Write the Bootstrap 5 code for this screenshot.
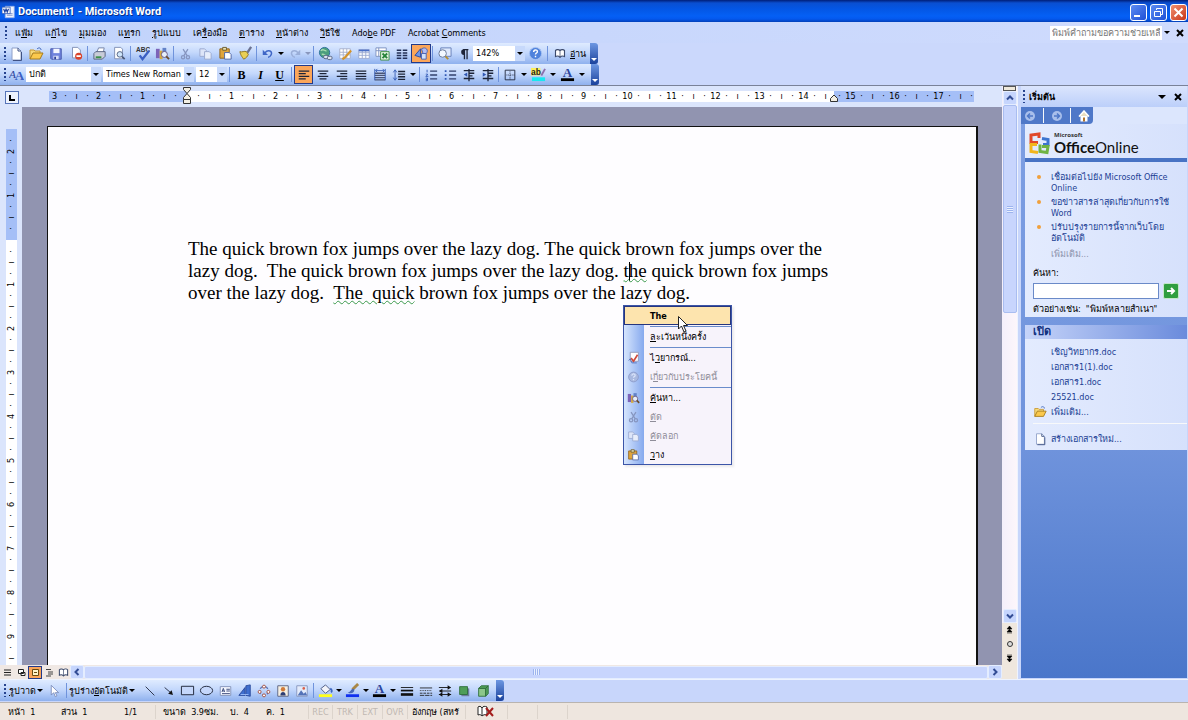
<!DOCTYPE html>
<html lang="th">
<head>
<meta charset="utf-8">
<meta name="viewport" content="width=device-width, initial-scale=1">
<title>Document1 - Microsoft Word</title>
<link href="https://cdn.jsdelivr.net/npm/bootstrap@5.3.0/dist/css/bootstrap.min.css" rel="stylesheet">
<style>
:root{--ui:"DejaVu Sans Condensed","Noto Sans",sans-serif;--navy:#1c3f94}
body{font-family:var(--ui);font-size:9px;line-height:12px;color:#000;background:#c8d6fb;height:100vh;overflow:hidden}
button{border:0;background:none;padding:0;color:inherit;font:inherit}
svg{display:block;flex:none}
u{text-underline-offset:1px}
a{text-decoration:none;color:var(--navy)}
.titlebar{height:22px;background:linear-gradient(#001e78 0,#0a4fd0 3px,#0455e2 8px,#0560f5 16px,#0458ee 19px,#0340b8 22px);color:#fff;padding:2px 1px 0 2px}
.titlebar h1{font:bold 11px/20px Roboto,"Noto Sans",sans-serif;margin:0;text-shadow:1px 1px 0 #0a2f8c}
.winbtn{width:17px;height:17px;border:1px solid #fff;border-radius:3px;background:linear-gradient(135deg,#5d8cf3,#1d4fd6)}
.winbtn.closer{background:linear-gradient(135deg,#f0906f,#c9361a)}
.menubar{height:21px;padding-left:5px;background:linear-gradient(90deg,#c1d3fb,#cfdbfd)}
.menubar .items{padding-left:8px;gap:12px}
.grip{width:2px;height:13px;flex:none;background:repeating-linear-gradient(#26438f 0 2px,transparent 2px 4px)}
.ask{width:112px;height:14px;border:0;background:#fff;font-size:9px;padding:0 2px;color:#777}
.ask::placeholder{color:#777}
.bars{background:#cbd8fc}
.tbar{height:21px;padding-left:4px;border-radius:0 2px 2px 0;background:linear-gradient(#dfebff,#c4d8fc 45%,#8fb1ee);flex:none}
.tb{width:20px;height:19px;display:flex;align-items:center;justify-content:center;flex:none}
.tb.n{width:19px}
.tb.on{border:1px solid #233a8a;background:#fba65a}
.dd{width:8px;height:18px;display:flex;align-items:center;justify-content:center;flex:none}
.b2 .dd,.menubar .dd,.pane .dd{width:10px}
.dd::after{content:"";border:3px solid transparent;border-top-color:#000;border-bottom:0}
.pane .dd::after{border-width:4px;border-bottom:0}
.dd.off::after{border-top-color:#8997bd}
.vsep{width:1px;height:15px;background:#6f93dc;margin:0 1px;flex:none}
.vsep.w{margin:0 2px}
.tail{width:8px;height:100%;margin-left:4px;background:linear-gradient(#6d97e2,#1b429c);border-radius:0 3px 3px 0;flex:none;display:flex;align-items:flex-end;justify-content:center;padding-bottom:3px}
.tail::after{content:"";border:3px solid transparent;border-top-color:#fff;border-bottom:0}
.combo{height:15px;border:0;border-radius:0;appearance:none;font-size:9px;line-height:13px;padding:0 12px 0 3px;background:#fff url("data:image/svg+xml,%3Csvg xmlns='http://www.w3.org/2000/svg' width='10' height='15'%3E%3Cpath fill='%23c7d9fb' d='M0 0h10v15H0z'/%3E%3Cpath d='M2 6h6l-3 3z'/%3E%3C/svg%3E") right/10px 15px no-repeat;color:#000;flex:none}
.combos{gap:2px}
.lbl{font:bold 12px/14px "Liberation Serif",serif}
.workspace{min-height:0;border-top:1px solid #7a8298}
.hruler{height:21px;background:#dbe5fc;padding:5px 28px 0 5px}
.tabsel{width:14px;height:13px;border:1px solid #5674b8;background:#eef3fe;flex:none}
.rule{font-size:9px;line-height:11px;height:11px}
.rule span{width:11px;text-align:center;flex:none}
.z-blue{background:#a5bff7}
.z-white{background:#fff}
.vrulerbox{width:22px;background:#dbe5fc;padding:22px 5px 0 6px;flex:none;overflow:hidden}
.vrule{width:11px;font-size:9px;line-height:11px}
.vrule span{height:11px;width:11px;display:flex;align-items:center;justify-content:center;transform:rotate(-90deg);flex:none}
.canvas{background:#9194b0;padding:19px 24px 0 25px;overflow:hidden}
.sheet{background:#fefdff;border:1px solid #111;border-right-width:2px;border-bottom:0;padding:111px 0 0 140px;height:100%;font:19px/22px "Liberation Serif",serif;position:relative;white-space:pre}
.sheet p{margin:0;line-height:22px}
.gram{text-decoration:underline wavy #3b9a4c 1px;text-underline-offset:1px}
.caret{display:inline-block;width:1px;height:19px;background:#000;vertical-align:-4px;margin-right:-1px}
.ctx{position:absolute;left:575px;top:178px;width:109px;font:9px/12px var(--ui);background:linear-gradient(90deg,#d6e5fd,#86a9ee 20px,#f7f3fb 20px);border:1px solid #3c55a8;box-shadow:2px 2px 2px #9993;white-space:nowrap}
.ctx button{display:flex;align-items:center;height:19px;width:100%;padding-left:3px}
.ctx button svg{margin-right:10px}
.ctx .pad{padding-left:26px}
.ctx .off{color:#8f8d99}
.ctx .pick{border:1px solid #26367e;background:#fde4ae;font-weight:bold;padding-left:25px}
.ctx hr{margin:1px 0 0 26px;border-top:1px solid #6a8ccb;opacity:1}
.pointer{position:absolute;left:630px;top:189px}
.vscroll{width:16px;background:linear-gradient(90deg,#f4effb,#fdf6fb);flex:none;border-right:1px solid #eef3fe}
.split{height:5px;width:13px;border:1px solid #555;background:#efe9dc}
.sbtn{width:14px;height:14px;background:#c6d5fd;border:1px solid #e4edff;border-radius:2px;display:flex;align-items:center;justify-content:center;flex:none}
.thumbv{width:14px;height:208px;background:#c8d5fd;border:1px solid #a9bdf0;border-radius:2px;display:flex;align-items:center;justify-content:center}
.thumbv::after{content:"";width:6px;height:7px;background:repeating-linear-gradient(#9db4ee 0 1px,#e9f0ff 1px 2px)}
.vscroll .foot{background:#efe7de;width:100%}
.hscroll{height:14px;background:#f0e8e4;flex:none}
.hscroll .tb{width:14px;height:13px}
.thumbh{background:#c8d5fd;border:1px solid #e4edff;height:13px;border-radius:2px;display:flex;align-items:center;justify-content:center}
.thumbh::after{content:"";width:7px;height:6px;background:repeating-linear-gradient(90deg,#9db4ee 0 1px,#e9f0ff 1px 2px)}
.pane{width:170px;background:#c8d6fb;padding:0 1px 1px 3px;flex:none}
.pane header{height:21px;padding:0 2px 0 2px;background:linear-gradient(#dbe5fd,#bccffa);font-weight:bold}
.pane .inner{background:linear-gradient(#7e9fe3,#6f93dc 60%,#4a76ca);padding-left:4px;min-height:0}
.pane .navtab{width:72px;height:17px;margin-left:-4px;background:#4f78c8;border-radius:0 0 4px 0;flex:none}
.pane .sect{background:linear-gradient(90deg,#e3ebfe,#d6e1fc)}
.pane .navrow{background:#dce6fd}
.pane .brand{height:38px;padding:8px 0 0 4px;border-bottom:4px solid #4873c4}
.brandname{font:15px/17px Lato,sans-serif;color:#111}
.brandname b{font-weight:700}
.brand small{font:bold 6px/7px "Open Sans",sans-serif;color:#333}
.bul{list-style:none;margin:0;padding:10px 8px 0 26px}
.bul li{line-height:11px;margin-bottom:3px;position:relative}
.bul li:last-child{padding-top:2px}
.bul li.dotted::before{content:"";position:absolute;left:-14px;top:3px;width:4px;height:4px;border-radius:2px;background:#f0a03c}
.find{width:127px;height:16px;border:1px solid #6a8ac8;background:#fff;padding:0 2px;font-size:9px}
.go{width:16px;height:16px;background:#2f9e3f;border:1px solid #c4e6c8;border-radius:2px;display:flex;align-items:center;justify-content:center}
.opener{height:14px;background:linear-gradient(90deg,#c6d4f9,#6a8bdc);color:#10307e;font-size:11px;line-height:14px;font-weight:bold;padding-left:8px;margin:0}
.files{padding:6px 0 0 26px}
.files a{display:block;height:15px;line-height:15px}
.withicon{padding-left:8px;height:14px;gap:4px}
.drawbar{height:23px;background:#c8d6fb;flex:none;border-top:1px solid #eef3fe}
.status{height:18px;background:#eee6df;border-top:1px solid #b9b4b0;flex:none;padding:2px 0 0}
.status span{border-right:1px solid #dcd4cc;height:14px;line-height:14px;flex:none;white-space:pre;overflow:hidden}
.status .dim{color:#c0b8b2}
</style>
</head>
<body class="d-flex flex-column">

<svg width="0" height="0" class="position-absolute" aria-hidden="true">
<defs>
<symbol id="i-new" viewBox="0 0 16 16"><path d="M4 2h6l3 3v9H4z" fill="#fff" stroke="#8fa0c8"/><path d="M10 2v3h3M5 14.500h8.500V6" fill="none" stroke="#3f5284"/></symbol>
<symbol id="i-open" viewBox="0 0 16 16"><path d="M2 13V4h4l1 1h5v3" fill="#f7d978" stroke="#c99a35"/><path d="M2 13l3-6h10l-3 6z" fill="#fbc94c" stroke="#a57a1c"/><path d="M9 3c2-2 4-1 4 1" fill="none" stroke="#3a62b8"/></symbol>
<symbol id="i-save" viewBox="0 0 16 16"><path d="M2 2h12v12H3l-1-1z" fill="#6f82dc" stroke="#4152a8"/><path d="M5 2h7v5H5z" fill="#f4f6ff"/><path d="M5 10h6v4H5z" fill="#d5dcf6"/><path d="M6 11h2v3H6z" fill="#2f3f94"/></symbol>
<symbol id="i-perm" viewBox="0 0 16 16"><path d="M4 1h6l3 3v9H4z" fill="#fff" stroke="#7a8ab0"/><circle cx="11" cy="11" r="4" fill="#d8432b"/><path d="M8.500 10h5v2h-5z" fill="#fff"/></symbol>
<symbol id="i-print" viewBox="0 0 16 16"><path d="M5 7l2-5h6l-1 5z" fill="#fff" stroke="#7482a5"/><path d="M2 8l2-2h10v5l-3 3H2z" fill="#c8ccd8" stroke="#56617f"/><path d="M4 12h6" stroke="#3b8f48" stroke-width="2"/></symbol>
<symbol id="i-preview" viewBox="0 0 16 16"><path d="M3 1h7l2 2v11H3z" fill="#fff" stroke="#7a8ab0"/><circle cx="9" cy="9" r="3.200" fill="#cfe6fb" stroke="#4a5878"/><path d="M11.500 11.500l3 3" stroke="#4a5878" stroke-width="2"/></symbol>
<symbol id="i-spell" viewBox="0 0 16 16"><text x="1" y="6" font-size="7" font-weight="bold" font-family="Liberation Sans" fill="#333">ABC</text><path d="M5 10l3 4 7-9" fill="none" stroke="#3b5fc4" stroke-width="2.500"/></symbol>
<symbol id="i-research" viewBox="0 0 16 16"><path d="M1 3h4v10H1z" fill="#7c63b8"/><path d="M5 5h3v9H5z" fill="#d6a93f"/><path d="M8 2h4v10H8z" fill="#6383c8"/><circle cx="10" cy="9" r="3.200" fill="#e6effc" stroke="#6a587e"/><path d="M12 11l3 3" stroke="#6b4b2c" stroke-width="2"/></symbol>
<symbol id="i-cut" viewBox="0 0 16 16"><path d="M5 2l5 8M11 2L6 10" stroke="#8695bf" stroke-width="1.500"/><circle cx="5" cy="12" r="2" fill="none" stroke="#8695bf" stroke-width="1.500"/><circle cx="11" cy="12" r="2" fill="none" stroke="#8695bf" stroke-width="1.500"/></symbol>
<symbol id="i-copy" viewBox="0 0 16 16"><path d="M2 3h5l2 2v6H2z" fill="#dde5f8" stroke="#9aa9cf"/><path d="M7 6h5l2 2v6H7z" fill="#e8eefb" stroke="#9aa9cf"/></symbol>
<symbol id="i-paste" viewBox="0 0 16 16"><path d="M2 3h10v10H2z" fill="#e0a53c" stroke="#8f6420"/><path d="M5 1.500h4v3H5z" fill="#e8e2b8" stroke="#6b5b2c"/><path d="M7 7h5l2 2v5H7z" fill="#fff" stroke="#4f65a5"/></symbol>
<symbol id="i-brush" viewBox="0 0 16 16"><path d="M14 1l-4 6" stroke="#6b7290" stroke-width="2.500"/><path d="M2 6c2 1 5-1 7 0l2 3c-1 2-2 4-5 5-1-2-3-3-4-8z" fill="#e9cf55" stroke="#8d7420"/></symbol>
<symbol id="i-undo" viewBox="0 0 16 16"><path d="M4 7c4-5 11-2 8 3-1 2-2 3-4 3" fill="none" stroke="#3f66c6" stroke-width="2"/><path d="M1 3v7h7z" fill="#3f66c6"/></symbol>
<symbol id="i-redo" viewBox="0 0 16 16"><path d="M12 7C8 2 1 5 4 10c1 2 2 3 4 3" fill="none" stroke="#9aaed8" stroke-width="2"/><path d="M15 3v7H8z" fill="#9aaed8"/></symbol>
<symbol id="i-link" viewBox="0 0 16 16"><circle cx="7" cy="7" r="5.500" fill="#4c9e7e" stroke="#2b6f9b"/><path d="M3 5c3-3 4 1 6 0M4 9c3-1 3 2 5 1" stroke="#a8dcb0" stroke-width="1.500" fill="none"/><rect x="6" y="10" width="5" height="3.500" rx="1.500" fill="#dde3f0" stroke="#576483"/><rect x="10" y="11" width="5" height="3.500" rx="1.500" fill="#dde3f0" stroke="#576483"/></symbol>
<symbol id="i-drawtbl" viewBox="0 0 16 16"><path d="M2 2h12v11H2zM2 6h12M2 9h12M6 2v11M10 2v11" fill="#fff" stroke="#a3adc9"/><path d="M15 4L8 12l-3 2" stroke="#d3942c" stroke-width="2.500" fill="none"/></symbol>
<symbol id="i-tbl" viewBox="0 0 16 16"><path d="M2 3h12v10H2zM2 6.500h12M2 9.500h12M6 3v10M10 3v10" fill="#fff" stroke="#98a7d0"/><path d="M2 3h12v2H2z" fill="#4a6fc6"/></symbol>
<symbol id="i-excel" viewBox="0 0 16 16"><path d="M1 2h11v9H1zM1 5h11M4 2v9" fill="#fff" stroke="#7e92c0"/><path d="M6 6h9v9H6z" fill="#e7f4e4" stroke="#3f8f46"/><path d="M8 8l5 5M13 8l-5 5" stroke="#26843a" stroke-width="2"/></symbol>
<symbol id="i-cols" viewBox="0 0 16 16"><path d="M1 3h6M1 6.500h6M1 10h6M1 13.500h6M9 3h6M9 6.500h6M9 10h6M9 13.500h6" stroke="#243056" stroke-width="2"/></symbol>
<symbol id="i-draw" viewBox="0 0 16 16"><path d="M1 10L7 3v9z" fill="#6f95e6" stroke="#2a4aa0"/><path d="M8 3c5-3 8 2 5 5l-3 1z" fill="#b3bcf2" stroke="#4a62b4"/><path d="M8 8h5v6H8z" fill="#d2e0fb" stroke="#4a62b4"/></symbol>
<symbol id="i-map" viewBox="0 0 16 16"><path d="M4 2h11v9H4z" fill="#dfe9fd" stroke="#6880b8"/><circle cx="6" cy="8" r="4" fill="#f3f8ff" stroke="#667799"/><path d="M9 11l3 3" stroke="#b78e2d" stroke-width="2"/></symbol>
<symbol id="i-pilcrow" viewBox="0 0 16 16"><path d="M7 3h6M8.500 3v11M11.500 3v11" stroke="#1d2438" stroke-width="1.500"/><path d="M8 2.500a3.200 3.200 0 0 0 0 6.500z" fill="#1d2438"/></symbol>
<symbol id="i-help" viewBox="0 0 16 16"><circle cx="8" cy="8" r="6.500" fill="#4f82dc" stroke="#a9c3f2"/><path d="M6 6.500c0-3 4-3 4-.5 0 1.500-2 1.500-2 3M8 10.500v1.500" stroke="#fff" stroke-width="1.500" fill="none"/></symbol>
<symbol id="i-helpoff" viewBox="0 0 16 16"><circle cx="8" cy="8" r="6" fill="#a9b9e0" stroke="#8998c8"/><path d="M6 6.500c0-3 4-3 4-.5 0 1.500-2 1.500-2 3M8 10.500v1.500" stroke="#dbe4fa" stroke-width="1.500" fill="none"/></symbol>
<symbol id="i-book" viewBox="0 0 16 16"><path d="M8 4C6 2 3 3 2 4v8c2-1 4-1 6 1 2-2 4-2 6-1V4c-1-1-4-2-6 0z" fill="#fff" stroke="#3c4a6c" stroke-width="1.500"/><path d="M8 4v9" stroke="#3c4a6c"/></symbol>
<symbol id="i-left" viewBox="0 0 16 16"><path d="M2 3.500h12M2 6.500h8M2 9.500h12M2 12.500h8" stroke="#1d2438" stroke-width="1.500"/></symbol>
<symbol id="i-center" viewBox="0 0 16 16"><path d="M2 3.500h12M4 6.500h8M2 9.500h12M4 12.500h8" stroke="#1d2438" stroke-width="1.500"/></symbol>
<symbol id="i-right" viewBox="0 0 16 16"><path d="M2 3.500h12M6 6.500h8M2 9.500h12M6 12.500h8" stroke="#1d2438" stroke-width="1.500"/></symbol>
<symbol id="i-just" viewBox="0 0 16 16"><path d="M2 3.500h12M2 6.500h12M2 9.500h12M2 12.500h12" stroke="#1d2438" stroke-width="1.500"/></symbol>
<symbol id="i-dist" viewBox="0 0 16 16"><path d="M2 6h12M2 8.500h12M2 11h12M2 13.500h12" stroke="#4a5474" stroke-width="1.500"/><path d="M2 1v13M14 1v13M3 3h10M5 1L3 3l2 2M11 1l2 2-2 2" stroke="#3058b4" fill="none"/></symbol>
<symbol id="i-space" viewBox="0 0 16 16"><path d="M7 4h8M7 7h8M7 10h8M7 13h8" stroke="#1d2438" stroke-width="1.500"/><path d="M3.500 3v10M1.500 5l2-3 2 3M1.500 11l2 3 2-3" stroke="#3058b4" fill="none"/></symbol>
<symbol id="i-num" viewBox="0 0 16 16"><path d="M7 3.500h8M7 8h8M7 12.500h8" stroke="#33416d" stroke-width="1.500"/><path d="M3.500 2v3M2 7h2v1L2 9.500h3M2 11.500h2v3H2M2 13h2" stroke="#3058b4" fill="none"/></symbol>
<symbol id="i-bul" viewBox="0 0 16 16"><path d="M7 3.500h8M7 8h8M7 12.500h8" stroke="#33416d" stroke-width="1.500"/><path d="M2 2.500h2v2H2zM2 7h2v2H2zM2 11.500h2v2H2z" fill="#3058b4"/></symbol>
<symbol id="i-outd" viewBox="0 0 16 16"><path d="M2 3h12M8 6h6M8 9h4M2 12h12M8 1v14" stroke="#1d2438" stroke-width="1.500"/><path d="M6 5v5L2 7.500z" fill="#3058b4"/></symbol>
<symbol id="i-ind" viewBox="0 0 16 16"><path d="M2 3h12M8 6h6M8 9h4M2 12h12M8 1v14" stroke="#1d2438" stroke-width="1.500"/><path d="M2 5v5l4-2.500z" fill="#3058b4"/></symbol>
<symbol id="i-border" viewBox="0 0 16 16"><path d="M2.500 2.500h11v11h-11z" fill="none" stroke="#1d2438"/><path d="M8 4v9M4 8h9" stroke="#1d2438" stroke-dasharray="1 1"/></symbol>
<symbol id="i-hl" viewBox="0 0 16 16"><path d="M0 1h10v8H0z" fill="#fdf05a"/><text x="0" y="8" font-size="9" font-weight="bold" font-family="Liberation Sans" fill="#222">ab</text><path d="M15 2l-4 7" stroke="#8c6fae" stroke-width="2"/><path d="M1 11h14v4H1z" fill="#18e8f0"/></symbol>
<symbol id="i-color" viewBox="0 0 16 16"><text x="3" y="11" font-size="14" font-weight="bold" font-family="Liberation Serif" fill="#2c459c">A</text><path d="M1 12h14v3H1z" fill="#000"/></symbol>
<symbol id="i-style" viewBox="0 0 16 16"><text x="0" y="12" font-size="12" font-style="italic" font-family="Liberation Serif" fill="#2c459c">A</text><text x="6" y="14" font-size="14" font-weight="bold" font-family="Liberation Serif" fill="#3b5fc4">A</text></symbol>
<symbol id="i-arrow" viewBox="0 0 16 16"><path d="M4 1v12l3-3 2 5 2-1-2-4h4z" fill="#fff" stroke="#7184b5"/></symbol>
<symbol id="i-line" viewBox="0 0 16 16"><path d="M3 3l10 10" stroke="#1d2438"/></symbol>
<symbol id="i-larrow" viewBox="0 0 16 16"><path d="M3 4l7 6" stroke="#1d2438"/><path d="M12.500 12.500L7 11l4-4z" fill="#111"/></symbol>
<symbol id="i-rect" viewBox="0 0 16 16"><path d="M1.500 3.500h13v9h-13z" fill="#c5d7fb" stroke="#1d2438"/></symbol>
<symbol id="i-oval" viewBox="0 0 16 16"><ellipse cx="8" cy="8" rx="6.500" ry="4.500" fill="#c5d7fb" stroke="#1d2438"/></symbol>
<symbol id="i-tbox" viewBox="0 0 16 16"><path d="M2 3h12v10H2z" fill="#f4f7ff" stroke="#7d8db5"/><path d="M4 9l1.500-4L7 9M4.500 8h2M9 6h4M9 8h4M4 11h9" stroke="#2b3d70" fill="none"/></symbol>
<symbol id="i-wordart" viewBox="0 0 16 16"><path d="M1 13L8 4v9zM9 2l5-1v13l-5-1z" fill="#3f6fd0" stroke="#28489a"/><path d="M3 12h9" stroke="#9fc0fa"/></symbol>
<symbol id="i-diag" viewBox="0 0 16 16"><circle cx="8" cy="8" r="5" fill="none" stroke="#5873b5" stroke-width="1.500" stroke-dasharray="4 2"/><g fill="#fff" stroke="#a44b3c"><circle cx="8" cy="3" r="1.700"/><circle cx="13" cy="9" r="1.700"/><circle cx="8" cy="13" r="1.700"/><circle cx="3" cy="9" r="1.700"/></g></symbol>
<symbol id="i-clip" viewBox="0 0 16 16"><path d="M2 2h12v12H2z" fill="#f5efe2" stroke="#555e7d"/><circle cx="8" cy="6" r="2.500" fill="#d07b3a"/><path d="M5 13c0-5 6-5 6 0z" fill="#2d3e74"/></symbol>
<symbol id="i-pic" viewBox="0 0 16 16"><path d="M2 2h12v12H2z" fill="#e3ebfb" stroke="#8393bb"/><circle cx="10" cy="5" r="1.500" fill="#d8604a"/><path d="M3 13l4-6 3 4 2-2 2 4z" fill="#5473b8"/></symbol>
<symbol id="i-fill" viewBox="0 0 16 16"><path d="M3 6l5-4 5 5-5 4z" fill="#f2f4fa" stroke="#4f5d85"/><path d="M13 6c2 1 2 3 1 4" stroke="#3c66c0" stroke-width="2" fill="none"/><path d="M1 12h14v3H1z" fill="#ffff20"/></symbol>
<symbol id="i-pen" viewBox="0 0 16 16"><path d="M14 1L8 7" stroke="#a98746" stroke-width="3"/><path d="M9 6c-3 0-3 4-6 4 3 2 7 1 7-3z" fill="#4868b8"/><path d="M1 12h14v3H1z" fill="#1030f0"/></symbol>
<symbol id="i-lw" viewBox="0 0 16 16"><path d="M1 4h14" stroke="#111"/><path d="M1 7.500h14" stroke="#111" stroke-width="2"/><path d="M1 12h14" stroke="#111" stroke-width="3"/></symbol>
<symbol id="i-dash" viewBox="0 0 16 16"><path d="M1 4.500h14" stroke="#222"/><path d="M1 7.500h14" stroke="#222" stroke-dasharray="1 1"/><path d="M1 10.500h14" stroke="#222" stroke-dasharray="3 1"/><path d="M1 13h14" stroke="#222" stroke-dasharray="5 1"/></symbol>
<symbol id="i-arrs" viewBox="0 0 16 16"><path d="M1 4h13M2 8h13M1 12h14" stroke="#111"/><path d="M11 1.500L15 4l-4 2.500zM5 5.500L1 8l4 2.500zM11 9.500l4 2.500-4 2.500zM5 9.500L1 12l4 2.500z" fill="#111"/></symbol>
<symbol id="i-shadow" viewBox="0 0 16 16"><path d="M5 5h9v9H5z" fill="#6d7c9e"/><path d="M3 3h9v9H3z" fill="#4f9e58" stroke="#2f6e3c"/></symbol>
<symbol id="i-3d" viewBox="0 0 16 16"><path d="M3 5h8v9H3z" fill="#8cc78a" stroke="#2f6e3c"/><path d="M3 5l3-3h8l-3 3zM11 5l3-3v9l-3 3z" fill="#4f9e58" stroke="#2f6e3c"/></symbol>
<symbol id="i-gram" viewBox="0 0 16 16"><path d="M4 1h10v11H4z" fill="#fff" stroke="#8c94b4"/><path d="M5 8l3 4 5-8" stroke="#d04a3a" stroke-width="2" fill="none"/><path d="M2 11l2-2 2 5h6" stroke="#4868b8" fill="none"/></symbol>
</defs>
</svg>

<div class="titlebar d-flex align-items-center">
  <svg width="13" height="14" viewBox="0 0 16 16"><path d="M4 1h11v14H4z" fill="#eef3ff" stroke="#9cb4e8"/><path d="M6 10h7M6 12h7" stroke="#6c86c6"/><path d="M0 2h10v8H0z" fill="#fff" stroke="#2f56b4"/><path d="M2 4l1.500 4L5 4.500 6.500 8 8 4" stroke="#2246a4" stroke-width="1.500" fill="none"/></svg>
  <h1 class="flex-grow-1" style="padding-left:3px">Document1 - Microsoft Word</h1>
  <div class="d-flex" style="gap:3px">
    <button class="winbtn" aria-label="ย่อ"><svg width="15" height="15"><path d="M3 10h6v2H3z" fill="#fff"/></svg></button>
    <button class="winbtn" aria-label="คืนขนาด"><svg width="15" height="15"><path d="M5.500 5V3.500h6v6H10M3.500 6.500h6v5h-6z" fill="none" stroke="#fff"/></svg></button>
    <button class="winbtn closer" aria-label="ปิด"><svg width="15" height="15"><path d="M3.500 3.500l8 8M11.500 3.500l-8 8" stroke="#fff" stroke-width="2"/></svg></button>
  </div>
</div>

<nav class="menubar d-flex align-items-center">
  <i class="grip"></i>
  <div class="items d-flex flex-grow-1">
    <button>แ<u>ฟ้</u>ม</button><button>แ<u>ก้</u>ไข</button><button><u>มุ</u>มมอง</button><button>แ<u>ท</u>รก</button><button><u>รู</u>ปแบบ</button><button>เค<u>รื่</u>องมือ</button><button><u>ต</u>าราง</button><button><u>ห</u>น้าต่าง</button><button><u>วิ</u>ธีใช้</button><button>Ado<u>b</u>e PDF</button><button>Acrobat <u>C</u>omments</button>
  </div>
  <input class="ask" placeholder="พิมพ์คำถามขอความช่วยเหลือ" aria-label="คำถาม">
  <button class="dd" aria-label="รายการคำถาม"></button>
  <button class="tb" style="width:16px" aria-label="ปิดเอกสาร"><svg width="8" height="8"><path d="M1 1l6 6M7 1L1 7" stroke="#000" stroke-width="2"/></svg></button>
</nav>

<div class="bars d-flex flex-column align-items-start">
  <div class="tbar d-flex align-items-center" role="toolbar">
    <i class="grip"></i>
    <button class="tb" aria-label="สร้าง"><svg width="16" height="16"><use href="#i-new"/></svg></button>
    <button class="tb" aria-label="เปิด"><svg width="16" height="16"><use href="#i-open"/></svg></button>
    <button class="tb" aria-label="บันทึก"><svg width="14" height="14"><use href="#i-save"/></svg></button>
    <button class="tb" aria-label="สิทธิ์"><svg width="14" height="15"><use href="#i-perm"/></svg></button>
    <i class="vsep"></i>
    <button class="tb" aria-label="พิมพ์"><svg width="15" height="15"><use href="#i-print"/></svg></button>
    <button class="tb" aria-label="ตัวอย่าง"><svg width="14" height="15"><use href="#i-preview"/></svg></button>
    <i class="vsep"></i>
    <button class="tb" aria-label="สะกด"><svg width="15" height="15"><use href="#i-spell"/></svg></button>
    <button class="tb" aria-label="ค้นคว้า"><svg width="15" height="15"><use href="#i-research"/></svg></button>
    <i class="vsep"></i>
    <button class="tb" aria-label="ตัด"><svg width="13" height="14"><use href="#i-cut"/></svg></button>
    <button class="tb" aria-label="คัดลอก"><svg width="15" height="15"><use href="#i-copy"/></svg></button>
    <button class="tb" aria-label="วาง"><svg width="15" height="15"><use href="#i-paste"/></svg></button>
    <button class="tb" aria-label="ตัวคัดวางรูปแบบ"><svg width="15" height="15"><use href="#i-brush"/></svg></button>
    <i class="vsep"></i>
    <button class="tb n" aria-label="เลิกทำ"><svg width="12" height="13"><use href="#i-undo"/></svg></button><button class="dd" aria-label="รายการเลิกทำ"></button>
    <button class="tb n" aria-label="ทำซ้ำ"><svg width="12" height="13"><use href="#i-redo"/></svg></button><button class="dd off" aria-label="รายการทำซ้ำ"></button>
    <i class="vsep"></i>
    <button class="tb" aria-label="ลิงก์"><svg width="15" height="15"><use href="#i-link"/></svg></button>
    <button class="tb n" aria-label="วาดตาราง"><svg width="14" height="14"><use href="#i-drawtbl"/></svg></button>
    <button class="tb n" aria-label="แทรกตาราง"><svg width="14" height="14"><use href="#i-tbl"/></svg></button>
    <button class="tb n" aria-label="Excel"><svg width="15" height="15"><use href="#i-excel"/></svg></button>
    <button class="tb n" aria-label="คอลัมน์"><svg width="12" height="12"><use href="#i-cols"/></svg></button>
    <button class="tb on" aria-label="รูปวาด"><svg width="15" height="15"><use href="#i-draw"/></svg></button>
    <i class="vsep"></i>
    <button class="tb" aria-label="แผนผัง"><svg width="15" height="15"><use href="#i-map"/></svg></button>
    <button class="tb n" aria-label="แสดงย่อหน้า"><svg width="14" height="14"><use href="#i-pilcrow"/></svg></button>
    <select class="combo" style="width:52px" aria-label="ย่อขยาย"><option>142%</option></select>
    <button class="tb" aria-label="วิธีใช้"><svg width="15" height="15"><use href="#i-help"/></svg></button>
    <i class="vsep w"></i>
    <button class="d-flex align-items-center gap-1 ms-1"><svg width="12" height="13"><use href="#i-book"/></svg><span><u>อ่</u>าน</span></button>
    <i class="tail"></i>
  </div>
  <div class="tbar b2 d-flex align-items-center" role="toolbar">
    <i class="grip"></i>
    <button class="tb" aria-label="ลักษณะ"><svg width="15" height="15"><use href="#i-style"/></svg></button>
    <div class="combos d-flex"><select class="combo" style="width:75px" aria-label="ลักษณะ"><option>ปกติ</option></select><select class="combo" style="width:91px" aria-label="แบบอักษร"><option>Times New Roman</option></select><select class="combo" style="width:31px" aria-label="ขนาด"><option>12</option></select></div>
    <i class="vsep w"></i>
    <button class="tb n lbl">B</button><button class="tb n lbl fst-italic">I</button><button class="tb n lbl text-decoration-underline">U</button>
    <i class="vsep w"></i>
    <button class="tb n on" aria-label="ชิดซ้าย"><svg width="14" height="14"><use href="#i-left"/></svg></button>
    <button class="tb n" aria-label="กึ่งกลาง"><svg width="14" height="14"><use href="#i-center"/></svg></button>
    <button class="tb n" aria-label="ชิดขวา"><svg width="14" height="14"><use href="#i-right"/></svg></button>
    <button class="tb n" aria-label="เต็มแนว"><svg width="14" height="14"><use href="#i-just"/></svg></button>
    <button class="tb n" aria-label="กระจาย"><svg width="14" height="14"><use href="#i-dist"/></svg></button>
    <button class="tb n" aria-label="ระยะบรรทัด"><svg width="14" height="14"><use href="#i-space"/></svg></button><button class="dd" aria-label="ระยะ"></button>
    <i class="vsep"></i>
    <button class="tb n" aria-label="ลำดับเลข"><svg width="14" height="14"><use href="#i-num"/></svg></button>
    <button class="tb n" aria-label="สัญลักษณ์"><svg width="14" height="14"><use href="#i-bul"/></svg></button>
    <button class="tb n" aria-label="ลดเยื้อง"><svg width="14" height="14"><use href="#i-outd"/></svg></button>
    <button class="tb n" aria-label="เพิ่มเยื้อง"><svg width="14" height="14"><use href="#i-ind"/></svg></button>
    <i class="vsep"></i>
    <button class="tb n" aria-label="เส้นขอบ"><svg width="14" height="14"><use href="#i-border"/></svg></button><button class="dd" aria-label="เส้นขอบอื่น"></button>
    <button class="tb n" aria-label="เน้น"><svg width="15" height="15"><use href="#i-hl"/></svg></button><button class="dd" aria-label="สีเน้น"></button>
    <button class="tb n" aria-label="สีอักษร"><svg width="15" height="15"><use href="#i-color"/></svg></button><button class="dd" aria-label="สีอื่น"></button>
    <i class="tail"></i>
  </div>
</div>

<main class="workspace d-flex flex-grow-1">
  <div class="d-flex flex-column flex-grow-1 overflow-hidden">
    <div class="hruler d-flex">
      <button class="tabsel" aria-label="แท็บ"><svg width="12" height="11"><path d="M4 3v5h5" stroke="#000" stroke-width="2" fill="none"/></svg></button>
      <div class="rule d-flex z-blue justify-content-end" id="r-left" style="width:138px;margin-left:30px"></div>
      <div class="rule d-flex z-white position-relative flex-grow-1" id="r-mid" style="padding-left:6px">
        <svg class="position-absolute" style="left:-5px;top:-5px" width="10" height="20"><path d="M1.500 1.500h7v2L5 7.500l3.500 4v2h-7v-2L5 7.500 1.500 3.500zM1.500 13.500h7v4h-7z" fill="#f3efe4" stroke="#333"/></svg>
        <svg class="position-absolute" style="right:-5px;top:3px" width="10" height="8"><path d="M5 1l3.500 3.500v3h-7v-3z" fill="#f3efe4" stroke="#333"/></svg>
      </div>
      <div class="rule d-flex z-blue overflow-hidden" id="r-right" style="width:140px"></div>
    </div>
    <div class="d-flex flex-grow-1 overflow-hidden">
      <div class="vrulerbox d-flex flex-column">
        <div class="vrule z-blue d-flex flex-column justify-content-end" id="v-top" style="height:111px;padding-bottom:6px"></div>
        <div class="vrule z-white d-flex flex-column flex-grow-1" id="v-mid" style="padding-top:6px"></div>
      </div>
      <div class="canvas flex-grow-1">
        <article class="sheet"><p>The quick brown fox jumps over the lazy dog. The quick brown fox jumps over the</p><p>lazy dog.  The quick brown fox jumps over the lazy dog. <span class="gram">t<i class="caret"></i>he</span> quick brown fox jumps</p><p>over the lazy dog.  <span class="gram">The  quick</span> brown fox jumps over the lazy dog.</p><div class="ctx" role="menu"><button class="pick">The</button><hr><button class="pad"><span><u>ล</u>ะเว้นหนึ่งครั้ง</span></button><hr><button><svg width="13" height="14"><use href="#i-gram"/></svg>ไ<u>ว</u>ยากรณ์...</button><button class="off"><svg width="13" height="14"><use href="#i-helpoff"/></svg>เ<u>กี่</u>ยวกับประโยคนี้</button><hr><button><svg width="13" height="14"><use href="#i-research"/></svg><u>ค้</u>นหา...</button><button class="off"><svg width="13" height="14"><use href="#i-cut"/></svg><u>ตั</u>ด</button><button class="off"><svg width="13" height="14"><use href="#i-copy"/></svg><u>คั</u>ดลอก</button><button><svg width="13" height="14"><use href="#i-paste"/></svg><u>ว</u>าง</button></div><svg class="pointer" width="11" height="17"><path d="M.500 .500v12.500l3-3 2.500 6 2-1-2.500-5.500h4z" fill="#fff" stroke="#222"/></svg></article>
      </div>
    </div>
    <div class="hscroll d-flex align-items-center">
      <button class="tb" aria-label="ปกติ"><svg width="9" height="9"><path d="M1 2h7M1 4.500h7M1 7h7" stroke="#222"/></svg></button>
      <button class="tb" aria-label="เว็บ"><svg width="9" height="9"><path d="M1.500 1.500h5v4h-5zM4 4.500h4v3H4z" fill="#fff" stroke="#222"/></svg></button>
      <button class="tb on" aria-label="เหมือนพิมพ์"><svg width="9" height="9"><path d="M1.500 1.500h6v6h-6zM3 4.500h3" fill="#fff3c8" stroke="#6a4a10"/></svg></button>
      <button class="tb" aria-label="เค้าร่าง"><svg width="9" height="9"><path d="M1 1.500h5M3 4h5M3 6h5M1 8h5" stroke="#444"/></svg></button>
      <button class="tb" aria-label="อ่าน"><svg width="11" height="11"><use href="#i-book"/></svg></button>
      <button class="sbtn" aria-label="ซ้าย"><svg width="8" height="8"><path d="M5.500 1L2.500 4l3 3" stroke="#324c94" stroke-width="2" fill="none"/></svg></button>
      <div class="thumbh flex-grow-1"></div>
      <button class="sbtn" aria-label="ขวา"><svg width="8" height="8"><path d="M2.500 1l3 3-3 3" stroke="#324c94" stroke-width="2" fill="none"/></svg></button>
    </div>
  </div>
  <div class="vscroll d-flex flex-column align-items-center">
    <i class="split flex-shrink-0"></i>
    <button class="sbtn" aria-label="ขึ้น"><svg width="8" height="8"><path d="M1 5.500l3-3 3 3" stroke="#324c94" stroke-width="2" fill="none"/></svg></button>
    <div class="thumbv"></div>
    <div class="flex-grow-1"></div>
    <button class="sbtn" aria-label="ลง"><svg width="8" height="8"><path d="M1 2.500l3 3 3-3" stroke="#324c94" stroke-width="2" fill="none"/></svg></button>
    <div class="foot d-flex flex-column align-items-center">
      <button class="sbtn border-0 bg-transparent" aria-label="หน้าก่อน"><svg width="7" height="8"><path d="M3.500 0L6 3H1zM3.500 3L6 6H1zM1 7h5" fill="#000" stroke="#000" stroke-width=".500"/></svg></button>
      <button class="sbtn border-0 bg-transparent" aria-label="เลือกวัตถุ"><svg width="8" height="8"><circle cx="4" cy="4" r="2.500" fill="#ddd" stroke="#333"/></svg></button>
      <button class="sbtn border-0 bg-transparent" aria-label="หน้าถัดไป"><svg width="7" height="8"><path d="M3.500 8L6 5H1zM3.500 5L6 2H1zM1 1h5" fill="#000" stroke="#000" stroke-width=".500"/></svg></button>
      <div style="height:14px"></div>
    </div>
  </div>

  <aside class="pane d-flex flex-column">
    <header class="d-flex align-items-center gap-1">
      <i class="grip"></i><span class="flex-grow-1">เริ่มต้น</span>
      <button class="dd" aria-label="บานหน้าต่างอื่น"></button>
      <button class="tb" style="width:14px" aria-label="ปิดบานหน้าต่าง"><svg width="8" height="8"><path d="M1 1l6 6M7 1L1 7" stroke="#000" stroke-width="2"/></svg></button>
    </header>
    <div class="inner flex-grow-1">
      <div class="navrow"><div class="navtab d-flex align-items-center justify-content-around">
        <svg width="12" height="12"><circle cx="6" cy="6" r="5" fill="#a9bfeb"/><path d="M9 6H4M6 3.500L3.500 6 6 8.500" stroke="#4f78c8" stroke-width="1.500" fill="none"/></svg><i class="vsep bg-light"></i>
        <svg width="12" height="12"><circle cx="6" cy="6" r="5" fill="#a9bfeb"/><path d="M3 6h5M6 3.500L8.500 6 6 8.500" stroke="#4f78c8" stroke-width="1.500" fill="none"/></svg><i class="vsep bg-light"></i>
        <svg width="12" height="12"><path d="M1 6.500L6 1l5 5.500" stroke="#fff" stroke-width="1.500" fill="#e8ddc0"/><path d="M2.500 6h7v5.500h-7z" fill="#fff"/><path d="M5 7.500h2v4H5z" fill="#b3752f"/></svg>
      </div></div>
      <section class="sect">
        <div class="brand d-flex">
          <svg width="22" height="24" viewBox="0 0 22 24"><g fill="none" stroke-width="3"><path d="M9 10.500H2V3l8-1v4" stroke="#e0482a"/><path d="M13 6.500l6 1v5h-5" stroke="#3c74cf"/><path d="M8 12.500H2v7l7 1" stroke="#f2b51d"/><path d="M11 12.500v7l7 1 1-6h-6" stroke="#6fb343"/></g></svg>
          <div class="d-flex flex-column" style="margin-left:3px"><small>Microsoft</small><div class="brandname"><b>Office</b>Online</div></div>
        </div>
        <ul class="bul">
          <li class="dotted"><a href="#">เชื่อมต่อไปยัง Microsoft Office<br>Online</a></li>
          <li class="dotted"><a href="#">ขอข่าวสารล่าสุดเกี่ยวกับการใช้<br>Word</a></li>
          <li class="dotted"><a href="#">ปรับปรุงรายการนี้จากเว็บโดย<br>อัตโนมัติ</a></li>
          <li><a href="#" style="color:#8d93ad">เพิ่มเติม...</a></li>
        </ul>
        <div class="px-2 pt-1">
          <label for="find" class="d-block pb-1">ค้นหา:</label>
          <div class="d-flex gap-1"><input id="find" class="find"><button class="go" aria-label="ค้นหา"><svg width="10" height="10"><path d="M1 5h7M5 2l3 3-3 3" stroke="#fff" stroke-width="2" fill="none"/></svg></button></div>
          <div class="pt-1 text-nowrap" style="height:18px">ตัวอย่างเช่น:&nbsp; "พิมพ์หลายสำเนา"</div>
        </div>
      </section>
      <section class="sect mt-2">
        <h2 class="opener">เปิด</h2>
        <div class="files"><a href="#">เชิญวิทยากร.doc</a><a href="#">เอกสาร1(1).doc</a><a href="#">เอกสาร1.doc</a><a href="#">25521.doc</a></div>
        <a href="#" class="withicon d-flex align-items-center"><svg width="14" height="14"><use href="#i-open"/></svg>เพิ่มเติม...</a>
        <hr class="mt-1 mb-2 ms-2 border-light opacity-100">
        <a href="#" class="withicon d-flex align-items-center"><svg width="14" height="14"><use href="#i-new"/></svg>สร้างเอกสารใหม่...</a>
        <div style="height:4px"></div>
      </section>
    </div>
  </aside>
</main>

<div class="drawbar d-flex">
  <div class="tbar d-flex align-items-center" role="toolbar">
    <i class="grip"></i>
    <button style="margin-left:3px"><u>รู</u>ปวาด</button><i class="dd"></i>
    <button class="tb" aria-label="เลือก"><svg width="13" height="14"><use href="#i-arrow"/></svg></button>
    <i class="vsep w"></i>
    <button>รูปร่าง<u>อั</u>ตโนมัติ</button><i class="dd me-1"></i>
    <button class="tb n" aria-label="เส้น"><svg width="14" height="14"><use href="#i-line"/></svg></button>
    <button class="tb n" aria-label="ลูกศร"><svg width="14" height="14"><use href="#i-larrow"/></svg></button>
    <button class="tb n" aria-label="สี่เหลี่ยม"><svg width="15" height="15"><use href="#i-rect"/></svg></button>
    <button class="tb n" aria-label="วงรี"><svg width="15" height="15"><use href="#i-oval"/></svg></button>
    <button class="tb n" aria-label="กล่องข้อความ"><svg width="15" height="14"><use href="#i-tbox"/></svg></button>
    <button class="tb n" aria-label="อักษรศิลป์"><svg width="14" height="14"><use href="#i-wordart"/></svg></button>
    <button class="tb n" aria-label="ไดอะแกรม"><svg width="14" height="14"><use href="#i-diag"/></svg></button>
    <button class="tb n" aria-label="ภาพตัดปะ"><svg width="14" height="14"><use href="#i-clip"/></svg></button>
    <button class="tb n" aria-label="รูปภาพ"><svg width="14" height="14"><use href="#i-pic"/></svg></button>
    <i class="vsep w"></i>
    <button class="tb n" aria-label="สีเติม"><svg width="15" height="15"><use href="#i-fill"/></svg></button><button class="dd" aria-label="สีเติมอื่น"></button>
    <button class="tb n" aria-label="สีเส้น"><svg width="15" height="15"><use href="#i-pen"/></svg></button><button class="dd" aria-label="สีเส้นอื่น"></button>
    <button class="tb n" aria-label="สีแบบอักษร"><svg width="15" height="15"><use href="#i-color"/></svg></button><button class="dd" aria-label="สีแบบอักษรอื่น"></button>
    <button class="tb n" aria-label="น้ำหนักเส้น"><svg width="14" height="14"><use href="#i-lw"/></svg></button>
    <button class="tb n" aria-label="เส้นประ"><svg width="14" height="14"><use href="#i-dash"/></svg></button>
    <button class="tb n" aria-label="หัวลูกศร"><svg width="14" height="14"><use href="#i-arrs"/></svg></button>
    <button class="tb n" aria-label="เงา"><svg width="14" height="14"><use href="#i-shadow"/></svg></button>
    <button class="tb n" aria-label="สามมิติ"><svg width="14" height="14"><use href="#i-3d"/></svg></button>
    <i class="tail"></i>
  </div>
</div>
<footer class="status d-flex">
  <span class="border-0" style="width:53px;padding-left:8px">หน้า  1</span><span class="border-0" style="width:63px;padding-left:8px">ส่วน  1</span><span style="width:40px;padding-left:8px">1/1</span><span class="border-0" style="width:66px;padding-left:7px">ขนาด  3.9ซม.</span><span class="border-0" style="width:36px;padding-left:8px">บ.  4</span><span style="width:51px;padding-left:8px">ค.  1</span><span class="dim text-center" style="width:24px">REC</span><span class="dim text-center" style="width:25px">TRK</span><span class="dim text-center" style="width:25px">EXT</span><span class="dim text-center" style="width:25px">OVR</span><span style="width:58px;padding-left:4px">อังกฤษ (สหรั</span><span style="width:42px;padding-left:11px"><svg width="17" height="13" viewBox="0 0 17 13"><path d="M5 3C4 1 2 1 1 2v8c2-1 3 0 4 1 1-1 3-2 5-1V2C8 1 6 1 5 3zM5 3v8" fill="#fff" stroke="#222"/><path d="M9 3l7 8M16 3l-7 8" stroke="#a31c1c" stroke-width="2"/></svg></span><span style="width:30px"></span><span style="width:30px"></span>
</footer>

<script>
// Ruler marks: each centimetre is a dot, a half tick, a dot and its number.
function marks(id, from, to, step) {
  const box = document.getElementById(id);
  for (let q = from; step > 0 ? q <= to : q >= to; q += step) {
    const s = document.createElement('span');
    s.textContent = q % 4 === 0 ? q / 4 : q % 2 === 0 ? 'ı' : '·';
    box.append(s);
  }
}
marks('r-left', 12, 1, -1);
document.getElementById('r-left').style.paddingRight = '6px';
marks('r-mid', 1, 58, 1);
marks('r-right', 59, 71, 1);
marks('v-top', 9, 1, -1);
marks('v-mid', 1, 38, 1);
</script>
<script src="https://cdn.jsdelivr.net/npm/bootstrap@5.3.0/dist/js/bootstrap.bundle.min.js"></script>
</body>
</html>
